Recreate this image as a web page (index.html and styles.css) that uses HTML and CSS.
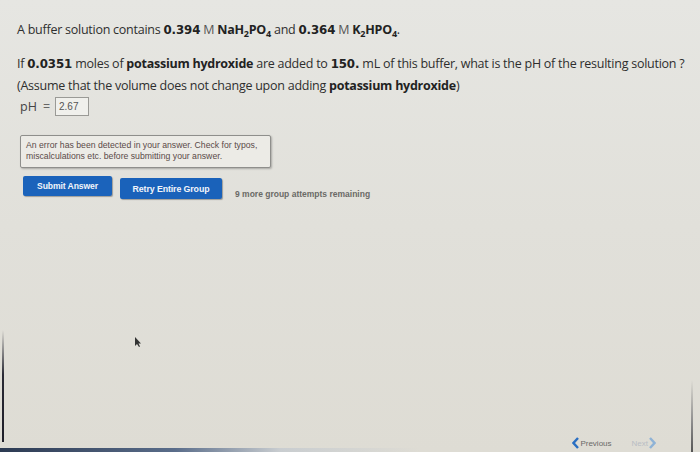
FILE: index.html
```html
<!DOCTYPE html>
<html>
<head>
<meta charset="utf-8">
<link rel="stylesheet" href="styles.css">
</head>
<body>
<div class="page">
  <p class="line first">A buffer solution contains <b class="num">0.394</b> <span class="unit">M</span> <b>NaH<sub>2</sub>PO<sub>4</sub></b> and <b class="num">0.364</b> <span class="unit">M</span> <b>K<sub>2</sub>HPO<sub>4</sub></b>.</p>
  <div class="question">
    <p class="line">If <b class="num">0.0351</b> moles of <b>potassium hydroxide</b> are added to <b class="num">150.</b> mL of this buffer, what is the pH of the resulting solution ?</p>
    <p class="line">(Assume that the volume does not change upon adding <b>potassium hydroxide</b>)</p>
  </div>
  <div class="answer">
    <span class="label">pH</span><span class="eq">=</span><span class="box">2.67</span>
  </div>
  <div class="error">An error has been detected in your answer. Check for typos, miscalculations etc. before submitting your answer.</div>
  <div class="actions">
    <span class="btn">Submit Answer</span>
    <span class="btn retry">Retry Entire Group</span>
    <span class="remaining">9 more group attempts remaining</span>
  </div>
  <div class="spacer">
    <svg class="cursor" width="8" height="12" viewBox="0 0 8 12"><path d="M1 1 L1 10 L3 8 L5 11 L6 10.5 L4.5 7.5 L7 7.5 Z" fill="#333"/></svg>
  </div>
  <div class="footer">
    <span class="nav prev"><svg width="7" height="12" viewBox="0 0 7 12"><path d="M6 1 L1.5 6 L6 11" fill="none" stroke="#2a6fc2" stroke-width="2.4"/></svg>Previous</span>
    <span class="nav next">Next<svg width="7" height="12" viewBox="0 0 7 12"><path d="M1 1 L5.5 6 L1 11" fill="none" stroke="#8fb3d6" stroke-width="2.4"/></svg></span>
  </div>
</div>
<div class="edge-left"></div>
<div class="edge-right"></div>
<div class="edge-bottom"></div>
</body>
</html>
```

FILE: styles.css
```css
html, body {
  margin: 0;
  padding: 0;
  width: 700px;
  height: 452px;
  overflow: hidden;
}
body {
  background: linear-gradient(180deg, #e6e6e2 0%, #e1e0da 50%, #dedcd4 100%);
  font-family: "Open Sans", "DejaVu Sans", sans-serif;
  color: #2e2e2e;
  position: relative;
}
.page {
  display: flex;
  flex-direction: column;
  height: 452px;
  padding: 0 0 0 17px;
  box-sizing: border-box;
}
.line {
  margin: 0;
  font-size: 12.5px;
  line-height: 21px;
  white-space: nowrap;
  letter-spacing: -0.25px;
}
.first {
  margin-top: 19px;
}
.line b {
  font-weight: 700;
  color: #222;
}
.line b.num {
  font-family: "DejaVu Sans", sans-serif;
  font-size: 11.8px;
  letter-spacing: -0.1px;
}
.unit {
  color: #555;
}
sub {
  font-size: 9px;
  line-height: 0;
  vertical-align: -3px;
}
.question {
  margin-top: 12px;
}
.answer {
  display: flex;
  align-items: center;
  margin-top: 1px;
  margin-left: 3px;
  font-size: 12.5px;
  color: #444;
}
.eq {
  margin: 0 5px 0 6px;
  color: #666;
}
.box {
  display: inline-flex;
  align-items: center;
  width: 34px;
  height: 19px;
  padding-left: 3px;
  box-sizing: border-box;
  border: 1px solid #9a9a96;
  background: #f0f0ec;
  font-family: "Liberation Sans", Arial, sans-serif;
  font-size: 10px;
  color: #555;
}
.error {
  margin-top: 19px;
  margin-left: 3px;
  width: 251px;
  height: 33px;
  box-sizing: border-box;
  padding: 4px 5px;
  border: 1px solid #8f8f8c;
  border-radius: 2px;
  background: #ecebe6;
  box-shadow: 1px 1px 2px rgba(0,0,0,0.25);
  font-family: "Liberation Sans", Arial, sans-serif;
  font-size: 8.7px;
  line-height: 11px;
  color: #5a4a48;
}
.actions {
  display: flex;
  align-items: flex-start;
  margin-top: 8px;
  margin-left: 6px;
  gap: 8px;
}
.btn {
  display: inline-flex;
  align-items: center;
  justify-content: center;
  width: 89px;
  height: 20px;
  background: #1b63bb;
  border-radius: 2px;
  box-shadow: 1px 1px 1px rgba(0,0,0,0.3);
  color: #f2f5fa;
  font-family: "Liberation Sans", Arial, sans-serif;
  font-weight: 700;
  font-size: 8.6px;
  letter-spacing: -0.1px;
}
.retry {
  width: 102px;
  height: 21px;
  margin-top: 2px;
  background: #1a62ba;
  font-size: 8.8px;
}
.remaining {
  margin-left: 5px;
  margin-top: 13px;
  font-family: "Liberation Sans", Arial, sans-serif;
  font-weight: 700;
  font-size: 8.5px;
  color: #6a6a66;
}
.spacer {
  flex: 1;
  position: relative;
}
.cursor {
  position: absolute;
  left: 117px;
  top: 137px;
}
.footer {
  display: flex;
  justify-content: flex-end;
  align-items: center;
  gap: 20px;
  padding-right: 44px;
  height: 18px;
  margin-bottom: 0px;
  font-family: "Liberation Sans", Arial, sans-serif;
  font-size: 8px;
}
.nav {
  display: inline-flex;
  align-items: center;
  gap: 1px;
}
.prev {
  color: #6a6a68;
}
.next {
  color: #b9bcc4;
}
.edge-left {
  position: absolute;
  left: 2px;
  top: 330px;
  width: 2px;
  height: 112px;
  background: linear-gradient(180deg, rgba(40,40,50,0) 0%, #2a2a35 40%, #1e1e28 100%);
}
.edge-right {
  position: absolute;
  left: 691px;
  top: 380px;
  width: 2px;
  height: 72px;
  background: linear-gradient(180deg, rgba(120,120,120,0) 0%, #8a8a8a 60%, #555 100%);
}
.edge-bottom {
  position: absolute;
  left: 0;
  bottom: 0;
  width: 700px;
  height: 4px;
  background: linear-gradient(90deg, #2c3a52 0%, #5a6d8a 25%, #c9cdd0 40%, rgba(220,220,216,0) 60%);
}
```
